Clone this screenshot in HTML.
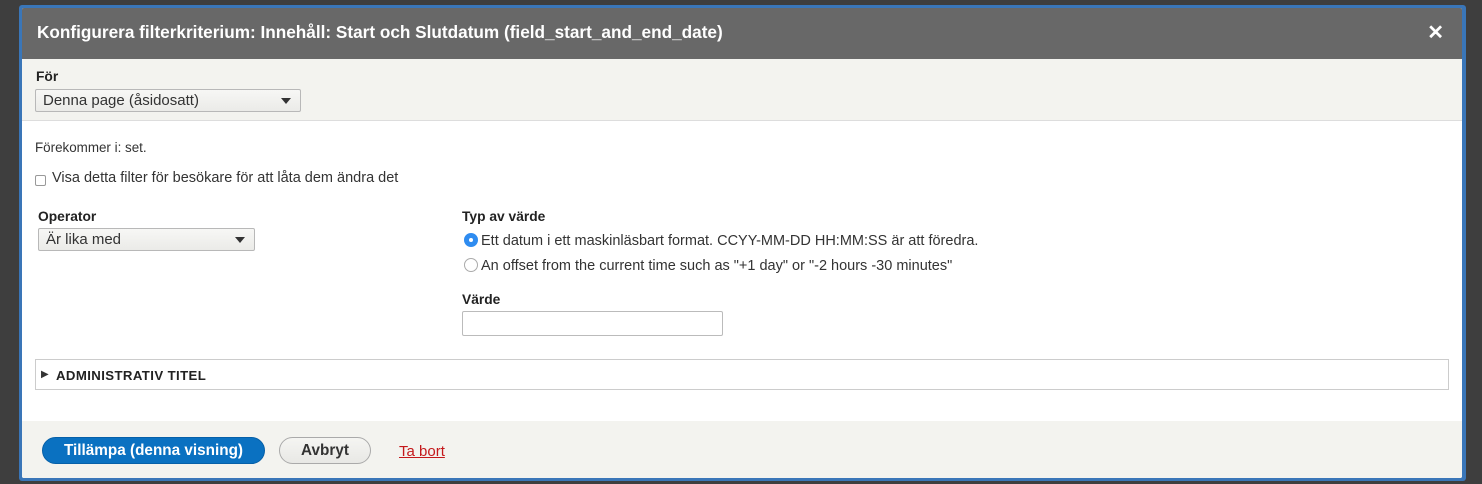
<!DOCTYPE html>
<html><head><meta charset="utf-8"><style>
*{box-sizing:border-box;margin:0;padding:0}
body{width:1482px;height:484px;background:#3e3e3e;font-family:"Liberation Sans",sans-serif;position:relative;overflow:hidden;color:#333}
.dlg{position:absolute;left:19px;top:5px;width:1447px;height:476px;background:#3a76b8;border-radius:3px}
.in{position:absolute;left:3px;top:3px;right:4px;bottom:3px;background:#fff;overflow:hidden;border-radius:2px}
.title{position:absolute;left:0;top:0;right:0;height:51px;background:#686868;color:#fff;font-weight:bold;font-size:17.2px;padding:14px 0 0 15px}
.x{position:absolute;right:18px;top:12px;font-size:20px;color:#fff;font-weight:bold}
.top{position:absolute;left:0;top:51px;right:0;height:62px;background:#f3f3ef;border-bottom:1px solid #ddd}
.lbl{position:absolute;font-weight:bold;font-size:13.8px;color:#222}
.sel{position:absolute;height:23px;border:1px solid #b8b8b8;border-radius:2px;background:linear-gradient(#f7f7f5,#ebebe8);font-size:15px;padding:2px 0 0 7px;color:#333}
.sel:after{content:"";position:absolute;right:9px;top:8px;border-left:5px solid transparent;border-right:5px solid transparent;border-top:6px solid #333}
.t{position:absolute;font-size:14.5px;color:#333;white-space:nowrap}
.radio{position:absolute;width:14px;height:14px;border-radius:50%;border:1px solid #aaa;background:#fff}
.foot{position:absolute;left:0;top:413px;right:0;bottom:0;background:#f3f3ef}
.btn{position:absolute;height:27px;border-radius:14px;font-weight:bold;font-size:15.3px;text-align:center;padding-top:4px}
</style></head><body>
<div class="dlg"><div class="in">
<div class="title">Konfigurera filterkriterium: Innehåll: Start och Slutdatum (field_start_and_end_date)</div>
<div class="x">✕</div>
<div class="top">
<div class="lbl" style="left:14px;top:10px">För</div>
<div class="sel" style="left:13px;top:30px;width:266px">Denna page (åsidosatt)</div>
</div>
<div class="t" style="left:13px;top:132px;font-size:13.4px">Förekommer i: set.</div>
<div style="position:absolute;left:13px;top:167px;width:11px;height:11px;border:1px solid #999;border-radius:2px;background:#fff"></div>
<div class="t" style="left:30px;top:162px">Visa detta filter för besökare för att låta dem ändra det</div>
<div class="lbl" style="left:16px;top:201px">Operator</div>
<div class="sel" style="left:16px;top:220px;width:217px">Är lika med</div>
<div class="lbl" style="left:440px;top:201px">Typ av värde</div>
<div class="radio" style="left:442px;top:225px;background:#2f8cf0;border-color:#2f8cf0"><div style="position:absolute;left:4px;top:4px;width:4px;height:4px;border-radius:50%;background:#fff"></div></div>
<div class="t" style="left:459px;top:225px">Ett datum i ett maskinläsbart format. CCYY-MM-DD HH:MM:SS är att föredra.</div>
<div class="radio" style="left:442px;top:250px"></div>
<div class="t" style="left:459px;top:250px">An offset from the current time such as "+1 day" or "-2 hours -30 minutes"</div>
<div class="lbl" style="left:440px;top:284px">Värde</div>
<div style="position:absolute;left:440px;top:303px;width:261px;height:25px;border:1px solid #bbb;border-radius:2px;background:#fff"></div>
<div style="position:absolute;left:13px;top:351px;width:1414px;height:31px;border:1px solid #ccc"></div>
<div class="t" style="left:19px;top:361px;font-size:10px">▶</div>
<div class="t" style="left:34px;top:360px;font-weight:bold;font-size:13.2px;letter-spacing:.4px;color:#222">ADMINISTRATIV TITEL</div>
<div class="foot">
<div class="btn" style="left:20px;top:16px;width:223px;background:#0a71c1;color:#fff;border:1px solid #0660a8">Tillämpa (denna visning)</div>
<div class="btn" style="left:257px;top:16px;width:92px;background:linear-gradient(#f5f5f2,#e8e8e5);border:1px solid #aaa;color:#333">Avbryt</div>
<div class="t" style="left:377px;top:22px;font-size:15px;color:#c4181b;text-decoration:underline">Ta bort</div>
</div>
</div></div>
</body></html>
